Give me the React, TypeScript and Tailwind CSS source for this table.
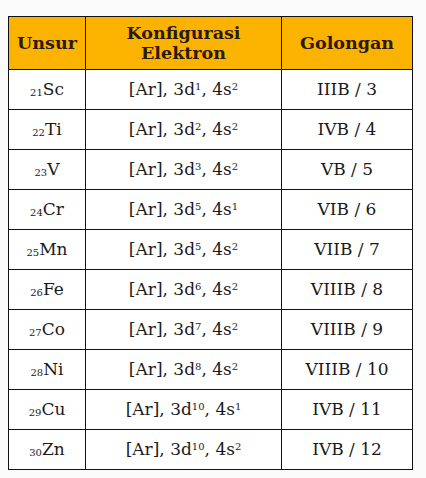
const rows = [
  { n: "21", el: "Sc", d: "1", s: "2", g: "IIIB / 3" },
  { n: "22", el: "Ti", d: "2", s: "2", g: "IVB / 4" },
  { n: "23", el: "V", d: "3", s: "2", g: "VB / 5" },
  { n: "24", el: "Cr", d: "5", s: "1", g: "VIB / 6" },
  { n: "25", el: "Mn", d: "5", s: "2", g: "VIIB / 7" },
  { n: "26", el: "Fe", d: "6", s: "2", g: "VIIIB / 8" },
  { n: "27", el: "Co", d: "7", s: "2", g: "VIIIB / 9" },
  { n: "28", el: "Ni", d: "8", s: "2", g: "VIIIB / 10" },
  { n: "29", el: "Cu", d: "10", s: "1", g: "IVB / 11" },
  { n: "30", el: "Zn", d: "10", s: "2", g: "IVB / 12" },
];

export default function App() {
  return (
    <div className="w-[426px] h-[478px] bg-[#fafafa] pt-4 pl-2 text-[#1a1a1a] font-['DejaVu_Serif',serif]">
      <table className="border-collapse w-[405px] text-[17px] font-['DejaVu_Serif',serif]">
        <thead>
          <tr className="bg-[#fcb300] text-[#2a1a00] font-bold h-[53px] text-[17.5px]">
            <th className="border border-[#111] w-[77px] text-center leading-[22px]">Unsur</th>
            <th className="border border-[#111] w-[196px] text-center leading-[20px]">
              Konfigurasi
              <br />
              Elektron
            </th>
            <th className="border border-[#111] text-center leading-[22px]">Golongan</th>
          </tr>
        </thead>
        <tbody>
          {rows.map((r) => (
            <tr key={r.el} className="bg-white h-[40px]">
              <td className="border border-[#111] text-center">
                <sub className="text-[10px] bottom-0 align-[-1px]">{r.n}</sub>
                {r.el}
              </td>
              <td className="border border-[#111] text-center">
                [Ar], 3d<sup className="text-[10px] top-0 align-[5px]">{r.d}</sup>, 4s
                <sup className="text-[10px] top-0 align-[5px]">{r.s}</sup>
              </td>
              <td className="border border-[#111] text-center">{r.g}</td>
            </tr>
          ))}
        </tbody>
      </table>
    </div>
  );
}
